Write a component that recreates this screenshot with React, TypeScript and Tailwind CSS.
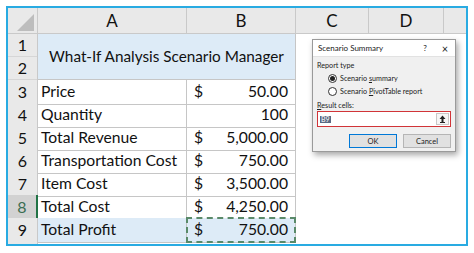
import React from "react";

interface Row {
  num: string;
  label: string;
  dollar: boolean;
  value: string;
}

const rows: Row[] = [
  { num: "3", label: "Price", dollar: true, value: "50.00" },
  { num: "4", label: "Quantity", dollar: false, value: "100" },
  { num: "5", label: "Total Revenue", dollar: true, value: "5,000.00" },
  { num: "6", label: "Transportation Cost", dollar: true, value: "750.00" },
  { num: "7", label: "Item Cost", dollar: true, value: "3,500.00" },
  { num: "8", label: "Total Cost", dollar: true, value: "4,250.00" },
  { num: "9", label: "Total Profit", dollar: true, value: "750.00" },
];

const cols = "grid grid-cols-[30px_149px_109px_73px_75px_1fr]";

const ScenarioDialog: React.FC = () => {
  return (
    <div
      className="absolute left-[304px] top-[31px] w-[144px] h-[113px] bg-[#f0f0f0] border border-[#9a9a9a] shadow-[2px_3px_6px_rgba(0,0,0,0.35)] text-[7.2px] text-[#222] leading-none"
      style={{ fontFamily: 'Lato, "Open Sans", sans-serif' }}
    >
      <div className="flex items-center h-[17px] bg-white px-[5px] border-b border-[#e2e2e2] text-[8px]">
        <span className="flex-1">Scenario Summary</span>
        <span className="w-[10px] text-center mr-[10px]">?</span>
        <span className="w-[10px] text-center text-[11px]">×</span>
      </div>
      <div className="px-[4px] pt-[5px]">
        <div>Report type</div>
        <div className="flex flex-col gap-[4px] mt-[5px] ml-[11px]">
          <div className="flex items-center gap-[3px]">
            <span className="w-[9px] h-[9px] rounded-full border border-[#333] bg-white flex items-center justify-center">
              <span className="w-[5px] h-[5px] rounded-full bg-[#222]" />
            </span>
            <span>
              Scenario <span className="underline">s</span>ummary
            </span>
          </div>
          <div className="flex items-center gap-[3px]">
            <span className="w-[9px] h-[9px] rounded-full border border-[#333] bg-white" />
            <span>
              Scenario <span className="underline">P</span>ivotTable report
            </span>
          </div>
        </div>
        <div className="mt-[6px]">
          <span className="underline">R</span>esult cells:
        </div>
        <div className="mt-[2px] flex items-center h-[16px] border-[1.5px] border-[#d13438] bg-white pl-[2px]">
          <span className="flex-1 flex">
            <span className="bg-[#5a6a84] text-white px-[1px] text-[7px]">B9</span>
          </span>
          <span className="w-[13px] h-[12px] mr-[1px] border border-[#c8c8c8] bg-[#f6f6f6] flex items-center justify-center">
            <svg width="7" height="8" viewBox="0 0 7 8">
              <path d="M3.5 0.5 L6.5 4 L4.5 4 L4.5 7 L2.5 7 L2.5 4 L0.5 4 Z" fill="#222" />
              <rect x="1" y="7" width="5" height="1" fill="#222" />
            </svg>
          </span>
        </div>
        <div className="flex justify-end gap-[6px] mt-[7px]">
          <button className="w-[48px] h-[14px] bg-[#e1e1e1] border-[1.5px] border-[#0078d7] text-[7.5px] leading-none">
            OK
          </button>
          <button className="w-[48px] h-[14px] bg-[#e1e1e1] border border-[#b5b5b5] text-[7.5px] leading-none">
            Cancel
          </button>
        </div>
      </div>
    </div>
  );
};

export default function App() {
  return (
    <div className="w-[474px] h-[253px] bg-white pt-[6px] pl-[6px] overflow-hidden">
      <div
        className="relative w-[462px] h-[240px] border-2 border-[#29abe2] bg-white overflow-hidden text-[#111]"
        style={{ fontFamily: 'Lato, "Open Sans", sans-serif' }}
      >
        {/* column headers */}
        <div className={`${cols} h-[26px] bg-[#e9e9e9] border-b border-[#c9c9c9] text-[17px]`}>
          <div className="border-r border-[#c9c9c9] relative">
            <svg className="absolute right-[3px] bottom-[3px]" width="17" height="17" viewBox="0 0 17 17">
              <polygon points="17,0 17,17 0,17" fill="#bdbdbd" />
            </svg>
          </div>
          <div className="border-r border-[#c9c9c9] flex items-center justify-center">A</div>
          <div className="border-r border-[#c9c9c9] flex items-center justify-center">B</div>
          <div className="border-r border-[#c9c9c9] flex items-center justify-center">C</div>
          <div className="border-r border-[#c9c9c9] flex items-center justify-center">D</div>
          <div />
        </div>

        {/* title rows 1-2 */}
        <div className={`${cols} grid-rows-[23px_23px] text-[15.7px]`}>
          <div className="row-span-2 flex flex-col bg-[#e9e9e9] border-r border-[#c9c9c9] text-[16px]">
            <div className="h-[23px] flex items-center justify-center border-b border-[#d6d6d6]">1</div>
            <div className="h-[23px] flex items-center justify-center border-b border-[#d6d6d6]">2</div>
          </div>
          <div className="col-span-2 row-span-2 bg-[#ddebf7] border-b border-[#c6c6c6] border-r flex items-center justify-center whitespace-nowrap text-[15.3px]">
            What-If Analysis Scenario Manager
          </div>
          <div className="row-span-2" />
          <div className="row-span-2" />
          <div className="row-span-2" />
        </div>

        {/* data rows */}
        {rows.map((r) => {
          const selected = r.num === "8";
          const blue = r.num === "9";
          return (
            <div key={r.num} className={`${cols} h-[23px] text-[15.7px]`}>
              <div
                className={`flex items-center justify-center text-[16px] border-b border-[#d6d6d6] ${
                  selected
                    ? "bg-[#d2d2d2] text-[#3c6e52] border-r-2 border-r-[#217346]"
                    : "bg-[#e9e9e9] border-r border-r-[#c9c9c9]"
                }`}
              >
                {r.num}
              </div>
              <div
                className={`flex items-center pl-[3px] border-b border-r border-[#c6c6c6] whitespace-nowrap ${
                  blue ? "bg-[#ddebf7]" : ""
                }`}
              >
                {r.label}
              </div>
              <div
                className={`relative flex items-center px-[7px] border-b border-r border-[#c6c6c6] ${
                  blue ? "bg-[#ddebf7]" : ""
                }`}
              >
                <span className="w-[12px]">{r.dollar ? "$" : ""}</span>
                <span className="flex-1 text-right">{r.value}</span>
                {blue && (
                  <span className="absolute inset-[-1px] border-2 border-dashed border-[#5a8a6a]" />
                )}
              </div>
              <div />
              <div />
              <div />
            </div>
          );
        })}

        {/* partial row 10 */}
        <div className={`${cols} h-[10px]`}>
          <div className="bg-[#e9e9e9] border-r border-[#c9c9c9]" />
        </div>

        <ScenarioDialog />
      </div>
    </div>
  );
}
